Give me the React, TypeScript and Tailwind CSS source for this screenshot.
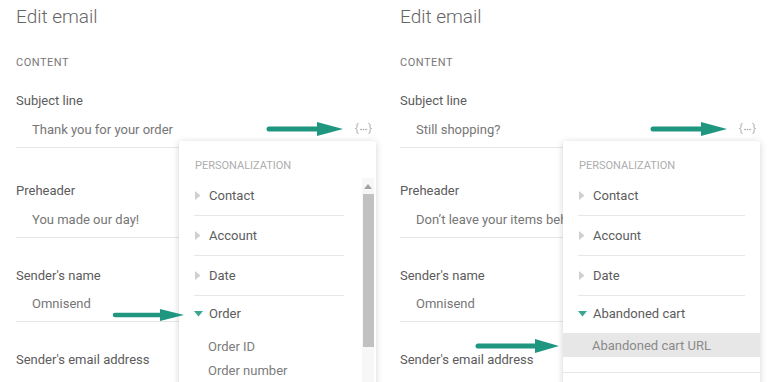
import React from "react";

const RightTri = () => (
  <svg width="6" height="9" viewBox="0 0 6 9" className="shrink-0">
    <polygon points="0,0 5.5,4.5 0,9" fill="#cfcfcf" />
  </svg>
);

const DownTri = () => (
  <svg width="9" height="6" viewBox="0 0 9 6" className="shrink-0">
    <polygon points="0,0 9,0 4.5,5.5" fill="#3ba593" />
  </svg>
);

const BraceIcon = () => (
  <svg width="17" height="11" viewBox="0 0 17 11" className="mb-[3px] shrink-0">
    <path d="M3.5 0.5 C2 0.5 2 1.5 2 3.2 C2 4.5 1.6 5.5 0.6 5.5 C1.6 5.5 2 6.5 2 7.8 C2 9.5 2 10.5 3.5 10.5" fill="none" stroke="#9a9a9a" strokeWidth="0.9" />
    <path d="M13.5 0.5 C15 0.5 15 1.5 15 3.2 C15 4.5 15.4 5.5 16.4 5.5 C15.4 5.5 15 6.5 15 7.8 C15 9.5 15 10.5 13.5 10.5" fill="none" stroke="#9a9a9a" strokeWidth="0.9" />
    <circle cx="6" cy="6.5" r="0.8" fill="#9a9a9a" />
    <circle cx="8.5" cy="6.5" r="0.8" fill="#9a9a9a" />
    <circle cx="11" cy="6.5" r="0.8" fill="#9a9a9a" />
  </svg>
);

function Field({
  label,
  value,
  mt,
  rowH,
  icon,
}: {
  label: string;
  value?: string;
  mt: string;
  rowH?: string;
  icon?: boolean;
}) {
  return (
    <div className={`flex flex-col ${mt}`}>
      <div className="text-[13px] leading-[16px] text-[#5c5c5c]">{label}</div>
      {value !== undefined && (
        <div className={`flex items-center border-b border-[#e6e6e6] pl-4 pr-1 pt-[3px] ${rowH}`}>
          <span className="flex-1 whitespace-nowrap text-[13px] text-[#767676]">{value}</span>
          {icon && <BraceIcon />}
        </div>
      )}
    </div>
  );
}

function Dropdown({ variant }: { variant: "order" | "cart" }) {
  const Item = ({ text }: { text: string }) => (
    <div className="mx-[15px] flex h-[40px] items-center gap-[8px] border-b border-[#e6e6e6] pl-[1px]">
      <RightTri />
      <span className="text-[13px] text-[#5c5c5c]">{text}</span>
    </div>
  );
  return (
    <div className="absolute left-[179px] top-[141px] z-10 h-[260px] w-[197px] rounded-[3px] bg-white shadow-[0_1px_7px_rgba(0,0,0,0.18)]">
      <div className={variant === "order" ? "mr-[17px]" : ""}>
        <div className="pl-4 pt-[17px] text-[11px] leading-[16px] text-[#adadad]">PERSONALIZATION</div>
        <div className="pt-[2px]">
          <Item text="Contact" />
          <Item text="Account" />
          <Item text="Date" />
        </div>
        <div className="mx-[15px] flex h-[34px] items-center gap-[6px] pt-[1px]">
          <DownTri />
          <span className="text-[13px] text-[#5c5c5c]">{variant === "order" ? "Order" : "Abandoned cart"}</span>
        </div>
        <div className="pt-[3px]">
          {variant === "order" ? (
            <>
              <div className="flex h-[24px] items-center pl-[29px] pt-[3px] text-[13px] text-[#7c7c7c]">Order ID</div>
              <div className="flex h-[24px] items-center pl-[29px] pt-[3px] text-[13px] text-[#7c7c7c]">Order number</div>
            </>
          ) : (
            <>
              <div className="flex h-[24px] items-center bg-[#e7e7e8] pl-[29px] pt-[2px] text-[13px] text-[#8a8a8a]">Abandoned cart URL</div>
              <div className="h-[16px] border-b border-[#e6e6e6]" />
            </>
          )}
        </div>
      </div>
      {variant === "order" && (
        <div className="absolute right-[2px] top-[37px] flex h-[223px] w-[12px] flex-col items-center bg-[#f7f7f7]">
          <svg width="8" height="5" viewBox="0 0 8 5" className="mt-[6px]">
            <polygon points="0,5 8,5 4,0" fill="#a3a3a3" />
          </svg>
          <div className="mt-[5px] h-[153px] w-[11px] bg-[#c1c1c1]" />
        </div>
      )}
    </div>
  );
}

function Panel({
  subject,
  preheader,
  variant,
}: {
  subject: string;
  preheader: string;
  variant: "order" | "cart";
}) {
  return (
    <div className="relative h-[382px] w-[384px] shrink-0 pl-4 pr-2">
      <div className="mt-[5px] h-[24px] text-[19px] font-light leading-[24px] text-[#666]">Edit email</div>
      <div className="mt-[26px] text-[11px] leading-[16px] tracking-[0.5px] text-[#777]">CONTENT</div>
      <Field label="Subject line" value={subject} mt="mt-[22px]" rowH="h-[39px]" icon />
      <Field label="Preheader" value={preheader} mt="mt-[35px]" rowH="h-[39px]" />
      <Field label="Sender's name" value="Omnisend" mt="mt-[30px]" rowH="h-[38px]" />
      <Field label="Sender's email address" mt="mt-[30px]" />
      <Dropdown variant={variant} />
    </div>
  );
}

export default function App() {
  return (
    <div
      className="relative flex h-[382px] w-[768px] overflow-hidden bg-white"
      style={{ fontFamily: "Roboto, 'Liberation Sans', sans-serif" }}
    >
      <Panel subject="Thank you for your order" preheader="You made our day!" variant="order" />
      <Panel subject="Still shopping?" preheader="Don’t leave your items behind" variant="cart" />

      <svg width="78" height="16" viewBox="0 0 78 16" className="absolute left-[266px] top-[121px] z-20">
        <line x1="3" y1="8" x2="55" y2="8" stroke="#1f9680" strokeWidth="5" strokeLinecap="round" />
        <polygon points="51,1 77,8 51,15" fill="#1f9680" />
      </svg>
      <svg width="73" height="16" viewBox="0 0 73 16" className="absolute left-[112px] top-[307px] z-20">
        <line x1="3" y1="8" x2="50" y2="8" stroke="#1f9680" strokeWidth="4.5" strokeLinecap="round" />
        <polygon points="48,2 72,8 48,14" fill="#1f9680" />
      </svg>
      <svg width="78" height="16" viewBox="0 0 78 16" className="absolute left-[650px] top-[121px] z-20">
        <line x1="3" y1="8" x2="55" y2="8" stroke="#1f9680" strokeWidth="5" strokeLinecap="round" />
        <polygon points="51,1 77,8 51,15" fill="#1f9680" />
      </svg>
      <svg width="85" height="16" viewBox="0 0 85 16" className="absolute left-[475px] top-[338px] z-20">
        <line x1="3" y1="8" x2="64" y2="8" stroke="#1f9680" strokeWidth="5" strokeLinecap="round" />
        <polygon points="60,1 84,8 60,15" fill="#1f9680" />
      </svg>
    </div>
  );
}
